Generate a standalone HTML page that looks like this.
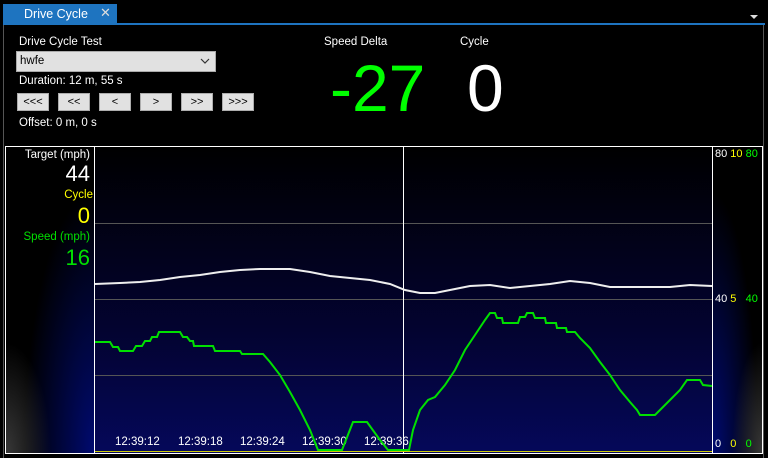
<!DOCTYPE html>
<html><head><meta charset="utf-8"><style>
body{margin:0;width:768px;height:458px;background:#000;overflow:hidden;font-family:"Liberation Sans",sans-serif;position:relative}
.a{position:absolute;white-space:nowrap}
.btn{position:absolute;top:93px;width:32px;height:18px;background:#e1e1e1;border:1px solid #adadad;box-sizing:border-box;font-size:11px;text-align:center;line-height:16px;color:#000}
.l{font-size:11px;color:#fff}
</style></head><body>
<div class="a" style="left:3px;top:4px;width:114px;height:20px;background:#1e74c0"></div>
<div class="a l" style="left:24px;top:7px;font-size:12.5px">Drive Cycle</div>
<div class="a" style="left:100px;top:5px;color:#ddd;font-size:13px">✕</div>
<div class="a" style="left:3px;top:23px;width:762px;height:2px;background:#1e74c0"></div>
<div class="a" style="left:3px;top:25px;width:1px;height:433px;background:#555"></div>
<div class="a" style="left:763px;top:25px;width:1px;height:433px;background:#555"></div>
<div class="a" style="left:750px;top:15px;width:0;height:0;border-left:4px solid transparent;border-right:4px solid transparent;border-top:4px solid #ddd"></div>
<div class="a l" style="left:19px;top:36px;font-size:11.5px">Drive Cycle Test</div>
<div class="a" style="left:16px;top:51px;width:200px;height:21px;background:#e1e1e1;border:1px solid #aaa;box-sizing:border-box;font-size:11.5px;line-height:19px;padding-left:3px">hwfe<svg style="position:absolute;right:5px;top:6px" width="10" height="6"><polyline points="1,1 5,5 9,1" fill="none" stroke="#333" stroke-width="1.2"/></svg></div>
<div class="a l" style="left:19px;top:75px;font-size:11.5px">Duration: 12 m, 55 s</div>
<div class="btn" style="left:17px">&lt;&lt;&lt;</div>
<div class="btn" style="left:58px">&lt;&lt;</div>
<div class="btn" style="left:99px">&lt;</div>
<div class="btn" style="left:140px">&gt;</div>
<div class="btn" style="left:181px">&gt;&gt;</div>
<div class="btn" style="left:222px">&gt;&gt;&gt;</div>
<div class="a l" style="left:19px;top:117px;font-size:11.5px">Offset: 0 m, 0 s</div>
<div class="a l" style="left:324px;top:36px;font-size:11.5px">Speed Delta</div>
<div class="a l" style="left:460px;top:36px;font-size:11.5px">Cycle</div>
<div class="a" style="left:330px;top:50px;font-size:66px;color:#00ff00;line-height:76px">-27</div>
<div class="a" style="left:467px;top:50px;font-size:66px;color:#fff;line-height:76px">0</div>

<div class="a" style="left:5px;top:146px;width:758px;height:308px;border:1px solid #fff;box-sizing:border-box"></div>
<div class="a" style="left:6px;top:147px;width:88px;height:306px;background:radial-gradient(ellipse 45px 110px at 0% 100%,#383838,rgba(0,0,0,0)),radial-gradient(ellipse 70px 260px at 100% 100%,#000a70,rgba(0,0,0,0)),#000"></div>
<div class="a" style="left:713px;top:147px;width:49px;height:306px;background:radial-gradient(ellipse 30px 110px at 100% 100%,#383838,rgba(0,0,0,0)),radial-gradient(ellipse 45px 260px at 0% 100%,#000a70,rgba(0,0,0,0)),#000"></div>
<div class="a" style="left:95px;top:147px;width:617px;height:306px;background:linear-gradient(#000 0%,#030330 60%,#05085a 100%)"></div>
<div class="a" style="left:94px;top:147px;width:1px;height:306px;background:#fff"></div>
<div class="a" style="left:712px;top:147px;width:1px;height:306px;background:#fff"></div>
<div class="a" style="left:6px;top:149px;width:84px;text-align:right;font-size:11.5px;color:#fff">Target (mph)</div>
<div class="a" style="left:6px;top:161px;width:84px;text-align:right;font-size:22px;color:#fff">44</div>
<div class="a" style="left:6px;top:189px;width:87px;text-align:right;font-size:11.5px;color:#ffff00">Cycle</div>
<div class="a" style="left:6px;top:203px;width:84px;text-align:right;font-size:22px;color:#ffff00">0</div>
<div class="a" style="left:6px;top:231px;width:84px;text-align:right;font-size:11.5px;color:#00e000">Speed (mph)</div>
<div class="a" style="left:6px;top:245px;width:84px;text-align:right;font-size:22px;color:#00e000">16</div>
<div class="a" style="left:715px;top:148px;font-size:11px;color:#fff">80 <span style="color:#ff0">10</span> <span style="color:#0f0">80</span></div>
<div class="a" style="left:715px;top:293px;font-size:11px;color:#fff">40 <span style="color:#ff0">5</span> &nbsp;&nbsp;<span style="color:#0f0">40</span></div>
<div class="a" style="left:715px;top:438px;font-size:11px;color:#fff">0 &nbsp;&nbsp;<span style="color:#ff0">0</span> &nbsp;&nbsp;<span style="color:#0f0">0</span></div>
<svg class="a" style="left:0;top:0" width="768" height="458">
<g stroke="#555" stroke-width="1"><line x1="95" y1="223.5" x2="712" y2="223.5"/><line x1="95" y1="299.5" x2="712" y2="299.5"/><line x1="95" y1="375.5" x2="712" y2="375.5"/></g>
<line x1="403.5" y1="147" x2="403.5" y2="453" stroke="#fff"/>
<line x1="95" y1="451.5" x2="712" y2="451.5" stroke="#cccc00"/>
<g font-family="Liberation Sans" font-size="11.5" fill="#fff"><text x="115" y="445">12:39:12</text><text x="178" y="445">12:39:18</text><text x="240" y="445">12:39:24</text><text x="302" y="445">12:39:30</text><text x="364" y="445">12:39:36</text></g>
<polyline fill="none" stroke="#eee" stroke-width="2" points="95,284 120,283 140,282 160,280 180,277 200,275 220,272 240,270 260,269 290,269 310,272 330,276 350,278 370,280 390,284 405,290 420,293 435,293 450,290 470,286 490,285 510,288 530,286 550,284 570,281 590,283 610,287 640,287 670,287 690,285 712,286"/>
<polyline fill="none" stroke="#00e000" stroke-width="2" points="95,342 110,342 113,347 118,347 120,351 133,351 136,346 142,346 145,341 150,341 152,337 157,337 159,332 180,332 183,337 187,337 190,341 193,341 194,346 213,346 215,351 240,351 242,354 263,354 270,362 280,375 290,392 300,410 310,430 318,450 342,450 353,422 367,422 380,440 388,450 409,450 413,430 420,410 428,400 435,397 445,385 455,370 465,350 475,335 485,320 490,313 495,313 497,318 502,318 503,323 518,323 520,317 525,317 527,313 533,313 535,318 545,318 546,323 556,323 557,328 566,328 567,332 575,332 580,338 590,348 600,362 610,375 620,390 630,402 637,410 640,415 655,415 660,410 670,400 680,390 687,380 700,380 703,385 712,386"/>
</svg>
</body></html>
